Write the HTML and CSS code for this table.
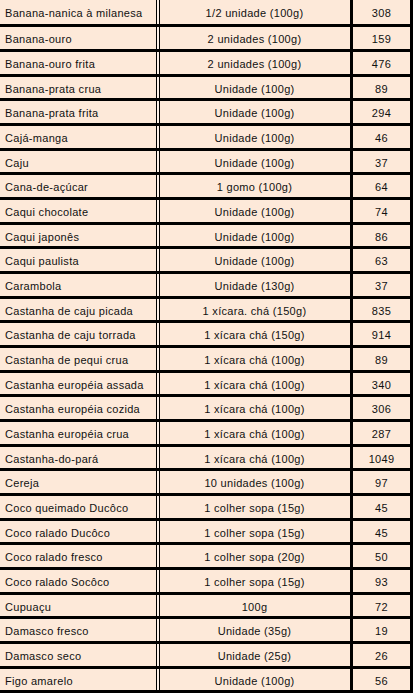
FILE: index.html
```html
<!DOCTYPE html>
<html lang="pt">
<head>
<meta charset="utf-8">
<title>Tabela de frutas</title>
<link rel="stylesheet" href="styles.css">
</head>
<body>
<div class="table">
  <div class="c name">Banana-nanica à milanesa</div><div class="c qty">1/2 unidade (100g)</div><div class="c kcal">308</div>
  <div class="c name">Banana-ouro</div><div class="c qty">2 unidades (100g)</div><div class="c kcal">159</div>
  <div class="c name">Banana-ouro frita</div><div class="c qty">2 unidades (100g)</div><div class="c kcal">476</div>
  <div class="c name">Banana-prata crua</div><div class="c qty">Unidade (100g)</div><div class="c kcal">89</div>
  <div class="c name">Banana-prata frita</div><div class="c qty">Unidade (100g)</div><div class="c kcal">294</div>
  <div class="c name">Cajá-manga</div><div class="c qty">Unidade (100g)</div><div class="c kcal">46</div>
  <div class="c name">Caju</div><div class="c qty">Unidade (100g)</div><div class="c kcal">37</div>
  <div class="c name">Cana-de-açúcar</div><div class="c qty">1 gomo (100g)</div><div class="c kcal">64</div>
  <div class="c name">Caqui chocolate</div><div class="c qty">Unidade (100g)</div><div class="c kcal">74</div>
  <div class="c name">Caqui japonês</div><div class="c qty">Unidade (100g)</div><div class="c kcal">86</div>
  <div class="c name">Caqui paulista</div><div class="c qty">Unidade (100g)</div><div class="c kcal">63</div>
  <div class="c name">Carambola</div><div class="c qty">Unidade (130g)</div><div class="c kcal">37</div>
  <div class="c name">Castanha de caju picada</div><div class="c qty">1 xícara. chá (150g)</div><div class="c kcal">835</div>
  <div class="c name">Castanha de caju torrada</div><div class="c qty">1 xícara chá (150g)</div><div class="c kcal">914</div>
  <div class="c name">Castanha de pequi crua</div><div class="c qty">1 xícara chá (100g)</div><div class="c kcal">89</div>
  <div class="c name">Castanha européia assada</div><div class="c qty">1 xícara chá (100g)</div><div class="c kcal">340</div>
  <div class="c name">Castanha européia cozida</div><div class="c qty">1 xícara chá (100g)</div><div class="c kcal">306</div>
  <div class="c name">Castanha européia crua</div><div class="c qty">1 xícara chá (100g)</div><div class="c kcal">287</div>
  <div class="c name">Castanha-do-pará</div><div class="c qty">1 xícara chá (100g)</div><div class="c kcal">1049</div>
  <div class="c name">Cereja</div><div class="c qty">10 unidades (100g)</div><div class="c kcal">97</div>
  <div class="c name">Coco queimado Ducôco</div><div class="c qty">1 colher sopa (15g)</div><div class="c kcal">45</div>
  <div class="c name">Coco ralado Ducôco</div><div class="c qty">1 colher sopa (15g)</div><div class="c kcal">45</div>
  <div class="c name">Coco ralado fresco</div><div class="c qty">1 colher sopa (20g)</div><div class="c kcal">50</div>
  <div class="c name">Coco ralado Socôco</div><div class="c qty">1 colher sopa (15g)</div><div class="c kcal">93</div>
  <div class="c name">Cupuaçu</div><div class="c qty">100g</div><div class="c kcal">72</div>
  <div class="c name">Damasco fresco</div><div class="c qty">Unidade (35g)</div><div class="c kcal">19</div>
  <div class="c name">Damasco seco</div><div class="c qty">Unidade (25g)</div><div class="c kcal">26</div>
  <div class="c name">Figo amarelo</div><div class="c qty">Unidade (100g)</div><div class="c kcal">56</div>
</div>
</body>
</html>
```

FILE: styles.css
```css
html, body {
  margin: 0;
  padding: 0;
  background: #ffffff;
}

.table {
  display: grid;
  grid-template-columns: 156px 194px 60px;
  grid-template-rows: 24px;
  grid-auto-rows: 22px 22px 21px;
  row-gap: 3px;
  column-gap: 0;
  width: 410px;
  padding: 0 3px 3px 0;
  background: #000000;
  font-family: "Liberation Sans", Arial, sans-serif;
  font-size: 11px;
  letter-spacing: 0.3px;
  color: #111111;
}

.c {
  background: #fde9d9;
  display: flex;
  align-items: center;
  padding-top: 2px;
  box-sizing: border-box;
  white-space: nowrap;
  overflow: hidden;
}

.name {
  padding-left: 5px;
}

.qty {
  margin-left: 1px;
  border-left: 2px solid #fdf1e8;
  box-shadow: inset 1px 0 0 #000000;
  justify-content: center;
}

.kcal {
  margin-left: 3px;
  justify-content: center;
}
```
